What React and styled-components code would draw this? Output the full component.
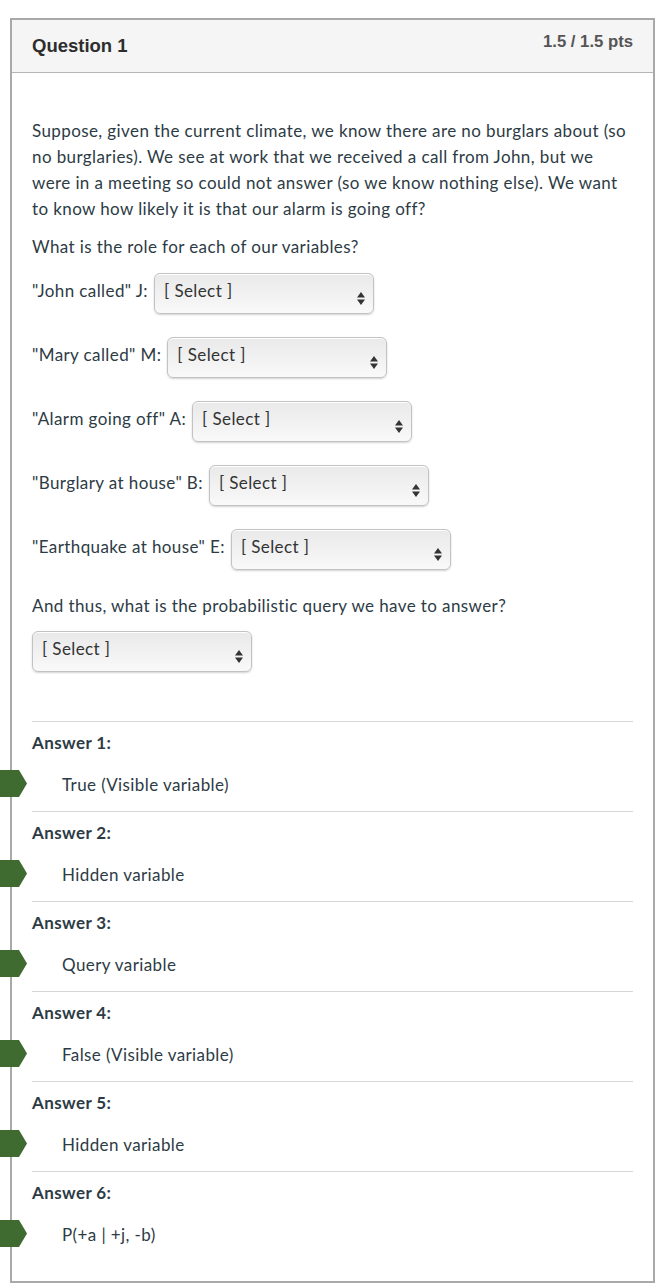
import React from "react";
import styled, { createGlobalStyle } from "styled-components";

const GlobalStyle = createGlobalStyle`
  html, body {
    margin: 0;
    padding: 0;
    background: #fff;
  }
  body {
    font-family: Lato, "Open Sans", sans-serif;
    color: #2d3b45;
  }
`;

const Page = styled.div`
  padding: 18px 7px 6px 10px;
`;

const QuestionBox = styled.div`
  border: 2px solid #a9a9a9;
  background: #fff;
`;

const Header = styled.div`
  display: flex;
  justify-content: space-between;
  align-items: flex-start;
  height: 53px;
  box-sizing: border-box;
  padding: 0 20px;
  background: #f5f5f5;
  border-bottom: 1px solid #b5b5b5;
`;

const Title = styled.div`
  font-family: "Liberation Sans", Arial, sans-serif;
  font-weight: bold;
  font-size: 18.5px;
  line-height: 52px;
  color: #2d2d2d;
`;

const Points = styled.div`
  font-family: "Liberation Sans", Arial, sans-serif;
  font-weight: bold;
  font-size: 16.7px;
  line-height: 18px;
  margin-top: 13px;
  color: #555;
`;

const Content = styled.div`
  padding: 45px 20px 20px;
  font-size: 17px;
  letter-spacing: 0.4px;
`;

const Para = styled.p`
  margin: 0 0 ${(p) => p.$gap ?? 12}px;
  line-height: 26px;
`;

const FieldRow = styled.div`
  display: flex;
  align-items: baseline;
  gap: 6px;
  margin-bottom: 23px;
  line-height: 26px;
`;

const SelectBox = styled.div`
  box-sizing: border-box;
  display: flex;
  justify-content: space-between;
  align-items: flex-start;
  width: 220px;
  height: 41px;
  padding: 7px 8px 0 9px;
  border: 1px solid #c2c2c2;
  border-radius: 6px;
  background: linear-gradient(#e9e9e9, #f9f9f9);
  box-shadow: 0 1px 2px rgba(0, 0, 0, 0.18), inset 0 1px 0 #fff;
  line-height: 20px;
  color: #333;
`;

const Arrows = styled.svg`
  margin-top: 11px;
  flex: none;
`;

const Answers = styled.div`
  margin-top: 49px;
`;

const AnswerBlock = styled.div`
  border-top: 1px solid #d6d6d6;
  padding: 10px 0 15px;
`;

const AnswerLabel = styled.div`
  font-weight: bold;
  line-height: 22px;
  color: #2d3b45;
`;

const AnswerText = styled.div`
  position: relative;
  margin-top: 20px;
  padding-left: 30px;
  line-height: 22px;
`;

const Marker = styled.svg`
  position: absolute;
  left: -32px;
  top: -4px;
`;

const Select = () => (
  <SelectBox>
    <span>[ Select ]</span>
    <Arrows width="8" height="13" viewBox="0 0 8 13">
      <polygon points="0,5.5 4,0 8,5.5" fill="#333" />
      <polygon points="0,7.5 8,7.5 4,13" fill="#333" />
    </Arrows>
  </SelectBox>
);

const fields = [
  '"John called" J:',
  '"Mary called" M:',
  '"Alarm going off" A:',
  '"Burglary at house" B:',
  '"Earthquake at house" E:',
];

const answers = [
  "True (Visible variable)",
  "Hidden variable",
  "Query variable",
  "False (Visible variable)",
  "Hidden variable",
  "P(+a | +j, -b)",
];

export default function App() {
  return (
    <Page>
      <GlobalStyle />
      <QuestionBox>
        <Header>
          <Title>Question 1</Title>
          <Points>1.5 / 1.5 pts</Points>
        </Header>
        <Content>
          <Para>
            Suppose, given the current climate, we know there are no burglars
            about (so no burglaries). We see at work that we received a call
            from John, but we were in a meeting so could not answer (so we know
            nothing else). We want to know how likely it is that our alarm is
            going off?
          </Para>
          <Para $gap={13}>What is the role for each of our variables?</Para>
          {fields.map((f) => (
            <FieldRow key={f}>
              <span>{f}</span>
              <Select />
            </FieldRow>
          ))}
          <Para>And thus, what is the probabilistic query we have to answer?</Para>
          <Select />
          <Answers>
            {answers.map((a, i) => (
              <AnswerBlock key={i}>
                <AnswerLabel>Answer {i + 1}:</AnswerLabel>
                <AnswerText>
                  <Marker width="27" height="27" viewBox="0 0 27 27">
                    <polygon points="0,0 19,0 27,13.5 19,27 0,27" fill="#3f6b30" />
                  </Marker>
                  {a}
                </AnswerText>
              </AnswerBlock>
            ))}
          </Answers>
        </Content>
      </QuestionBox>
    </Page>
  );
}
